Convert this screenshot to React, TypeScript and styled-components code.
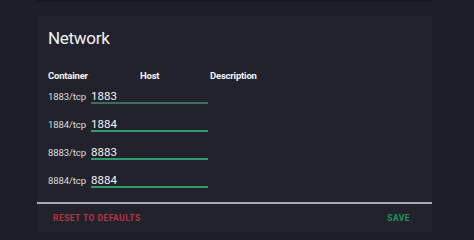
import React from 'react';
import styled, { createGlobalStyle } from 'styled-components';

interface Port {
  container: string;
  host: string;
}

const ports: Port[] = [
  { container: '1883/tcp', host: '1883' },
  { container: '1884/tcp', host: '1884' },
  { container: '8883/tcp', host: '8883' },
  { container: '8884/tcp', host: '8884' },
];

const GlobalStyle = createGlobalStyle`
  body {
    margin: 0;
    background: #1e1e27;
    font-family: Roboto, "Liberation Sans", sans-serif;
    overflow: hidden;
  }
`;

const Page = styled.div`
  width: 474px;
  height: 232px;
  padding: 0 42px 0 37px;
  box-sizing: border-box;
  display: flex;
  flex-direction: column;
`;

const PrevCard = styled.div`
  height: 4px;
  background: #18181f;
  border-radius: 0 0 3px 3px;
`;

const Card = styled.div`
  margin-top: 14px;
  flex: 1;
  background: #22222d;
  border-radius: 3px 3px 0 0;
  display: flex;
  flex-direction: column;
`;

const Body = styled.div`
  padding: 12px 11px 0 11px;
`;

const Title = styled.h2`
  margin: 0;
  font-size: 17px;
  line-height: 20px;
  font-weight: 400;
  letter-spacing: -0.3px;
  color: #f2f2f2;
`;

const HeaderRow = styled.div`
  margin-top: 22px;
  display: grid;
  grid-template-columns: 92px 70px auto;
  font-size: 9.5px;
  line-height: 12px;
  font-weight: 700;
  color: #f4f4f4;
  letter-spacing: -0.2px;
`;

const Rows = styled.div`
  margin-top: 7px;
  display: flex;
  flex-direction: column;
  gap: 13px;
`;

const Row = styled.div`
  display: flex;
  align-items: baseline;
`;

const PortLabel = styled.span`
  width: 43px;
  font-size: 9.5px;
  color: #dcdcdc;
  letter-spacing: -0.1px;
`;

const HostInput = styled.input<{ $dim?: boolean }>`
  width: 117px;
  height: 13px;
  padding: 0;
  margin: 0;
  border: none;
  border-bottom: 2px solid ${(p) => (p.$dim ? '#3d6e5a' : '#2e9d67')};
  background: transparent;
  color: #f2f2f2;
  font-family: Roboto, "Liberation Sans", sans-serif;
  font-size: 11.5px;
  outline: none;
`;

const Divider = styled.div`
  margin-top: 14px;
  height: 2px;
  background: #a9a9b2;
`;

const Footer = styled.div`
  height: 28px;
  padding: 0 22px 0 16px;
  display: flex;
  align-items: center;
  justify-content: space-between;
`;

const TextButton = styled.button<{ $color: string }>`
  background: none;
  border: none;
  padding: 0;
  font-family: Roboto, "Liberation Sans", sans-serif;
  font-size: 8.5px;
  font-weight: 700;
  letter-spacing: 0.45px;
  text-transform: uppercase;
  color: ${(p) => p.$color};
  cursor: pointer;
`;

const App: React.FC = () => {
  return (
    <Page>
      <GlobalStyle />
      <PrevCard />
      <Card>
        <Body>
          <Title>Network</Title>
          <HeaderRow>
            <span>Container</span>
            <span>Host</span>
            <span>Description</span>
          </HeaderRow>
          <Rows>
            {ports.map((port, i) => (
              <Row key={port.container}>
                <PortLabel>{port.container}</PortLabel>
                <HostInput $dim={i === 0} defaultValue={port.host} />
              </Row>
            ))}
          </Rows>
        </Body>
        <Divider />
        <Footer>
          <TextButton $color="#b13644">Reset to defaults</TextButton>
          <TextButton $color="#1f9656">Save</TextButton>
        </Footer>
      </Card>
    </Page>
  );
};

export default App;
